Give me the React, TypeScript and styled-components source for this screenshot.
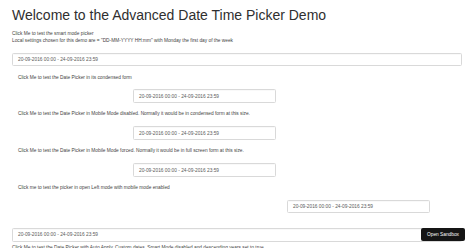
import React from 'react';
import styled, { createGlobalStyle } from 'styled-components';

const GlobalStyle = createGlobalStyle`
  html, body {
    margin: 0;
    padding: 0;
    background: #ffffff;
  }
  body {
    font-family: "Liberation Sans", Arial, sans-serif;
    color: #333333;
    overflow: hidden;
  }
`;

const Page = styled.div`
  position: relative;
  width: 474px;
  height: 248px;
  overflow: hidden;
  padding: 0 12px;
  box-sizing: border-box;
`;

const Title = styled.h1`
  margin: 0;
  padding-top: 8px;
  font-size: 14px;
  line-height: 14px;
  font-weight: 400;
  color: #2f2f2f;
`;

const Intro = styled.div`
  margin-top: 9px;
  font-size: 4.8px;
  line-height: 6.5px;
  color: #444444;
`;

const Label = styled.div<{ $indent?: number; $gap?: number }>`
  padding-left: ${p => p.$indent ?? 0}px;
  margin-top: ${p => p.$gap ?? 0}px;
  font-size: 4.8px;
  line-height: 6px;
  color: #444444;
  white-space: nowrap;
`;

const Field = styled.div<{ $offset?: number; $width?: number; $gap?: number }>`
  box-sizing: border-box;
  margin-top: ${p => p.$gap ?? 0}px;
  margin-left: ${p => p.$offset ?? 0}px;
  width: ${p => (p.$width ? `${p.$width}px` : '100%')};
  height: 13.4px;
  display: flex;
  align-items: center;
  padding-left: 5px;
  border: 1px solid #d9d9d9;
  border-radius: 1.5px;
  box-shadow: inset 0 0.5px 0.5px rgba(0, 0, 0, 0.05);
  font-size: 4.8px;
  color: #5a5a5a;
  white-space: nowrap;
`;

const SandboxButton = styled.button`
  position: absolute;
  left: 421px;
  top: 227.5px;
  width: 44px;
  height: 13.5px;
  padding: 0;
  border: none;
  border-radius: 2px;
  background: #151515;
  color: #ffffff;
  font-family: "Liberation Sans", Arial, sans-serif;
  font-size: 4.8px;
`;

const RANGE = '20-09-2016 00:00 - 24-09-2016 23:59';

export default function App() {
  return (
    <>
      <GlobalStyle />
      <Page>
        <Title>Welcome to the Advanced Date Time Picker Demo</Title>
        <Intro>
          Click Me to test the smart mode picker
          <br />
          Local settings chosen for this demo are = "DD-MM-YYYY HH:mm" with Monday the first day of the week
        </Intro>
        <Field $gap={9}>{RANGE}</Field>

        <Label $indent={6} $gap={9}>Click Me to test the Date Picker in its condensed form</Label>
        <Field $gap={8} $offset={121} $width={143}>{RANGE}</Field>

        <Label $indent={6} $gap={8.5}>
          Click Me to test the Date Picker in Mobile Mode disabled. Normally it would be in condensed form at this size.
        </Label>
        <Field $gap={9.2} $offset={121} $width={143}>{RANGE}</Field>

        <Label $indent={6} $gap={8.3}>
          Click Me to test the Date Picker in Mobile Mode forced. Normally it would be in full screen form at this size.
        </Label>
        <Field $gap={9.2} $offset={121} $width={143}>{RANGE}</Field>

        <Label $indent={6} $gap={8.2}>Click me to test the picker in open Left mode with mobile mode enabled</Label>
        <Field $gap={9} $offset={275} $width={143}>{RANGE}</Field>

        <Field $gap={14.9}>{RANGE}</Field>
        <Label $gap={3}>
          Click Me to test the Date Picker with Auto Apply, Custom dates, Smart Mode disabled and descending years set to true
        </Label>
        <SandboxButton>Open Sandbox</SandboxButton>
      </Page>
    </>
  );
}
